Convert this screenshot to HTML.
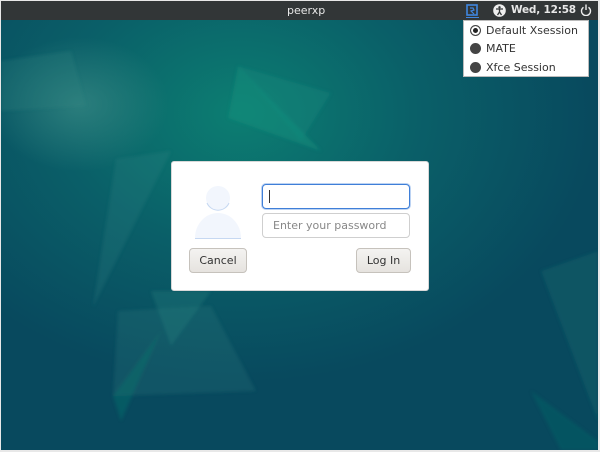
<!DOCTYPE html>
<html><head><style>
*{margin:0;padding:0;box-sizing:border-box}
body{width:600px;height:452px;overflow:hidden;background:#e8e8e8;font-family:"DejaVu Sans","Liberation Sans",sans-serif;position:relative}
#scr{position:absolute;left:1px;top:1px;width:597px;height:449px;overflow:hidden;background:#0a4d60}
#bar{position:absolute;left:0;top:0;width:597px;height:19px;background:#323637;color:#e8e8e8;font-size:11px}
.abs{position:absolute}
#menu{position:absolute;left:462px;top:19px;width:126px;height:57px;background:#fff;border:1px solid #bbb;font-size:11px;color:#333}
.it{position:absolute;left:6px;height:14px;line-height:14px}
.dot{display:inline-block;width:11px;height:11px;border-radius:50%;background:#444;vertical-align:-2px;margin-right:5px}
#dlg{position:absolute;left:170px;top:160px;width:258px;height:130px;background:#fff;border-radius:3px;border:1px solid #d8d8d8}
.fld{position:absolute;background:#fff;border:1px solid #cfcfcf;border-radius:4px;font-size:11px;color:#888}
.btn{position:absolute;background:linear-gradient(#f4f3f1,#e6e3df);border:1px solid #c6c2bc;border-radius:4px;font-size:11px;color:#333;text-align:center;line-height:23px}
</style></head><body>
<div id="scr">
<svg class="abs" style="left:0;top:0" width="597" height="449">
<defs>
<radialGradient id="g1" cx="0.4" cy="0.25" r="0.6"><stop offset="0" stop-color="#0c7e72"/><stop offset="0.5" stop-color="#0a5f68"/><stop offset="1" stop-color="#08495e"/></radialGradient>
<radialGradient id="g2" cx="0.13" cy="0.23" r="0.15"><stop offset="0" stop-color="#3a8a85" stop-opacity="0.7"/><stop offset="1" stop-color="#3a8a85" stop-opacity="0"/></radialGradient>
<filter id="bl"><feGaussianBlur stdDeviation="1.5"/></filter>
</defs>
<rect width="597" height="449" fill="url(#g1)"/>
<rect width="597" height="449" fill="url(#g2)"/>
<g filter="url(#bl)">
<polygon points="237,65 227,117 320,150" fill="#17937e" opacity="0.45"/>
<polygon points="237,65 330,92 300,140" fill="#139080" opacity="0.3"/>
<polygon points="0,60 70,50 85,105 0,110" fill="#2a8580" opacity="0.25"/>
<polygon points="115,158 170,150 92,306" fill="#3e8c8a" opacity="0.2"/>
<polygon points="117,310 210,305 255,390 112,395" fill="#3a8787" opacity="0.2"/>
<polygon points="112,395 160,330 120,420" fill="#108070" opacity="0.3"/>
<polygon points="150,290 210,290 170,345" fill="#2d8d85" opacity="0.25"/>
<polygon points="540,270 597,250 597,420" fill="#157070" opacity="0.3"/>
<polygon points="530,390 597,440 597,449 560,449" fill="#0f6a6a" opacity="0.4"/>
</g>
</svg>
<div id="bar">
<div class="abs" style="left:286px;top:3px">peerxp</div>
<svg class="abs" style="left:465px;top:3px" width="13" height="14"><rect x="1" y="1" width="10" height="10" fill="none" stroke="#3f86e0" stroke-width="1.6"/><path d="M4 4h3l1 2-3 1 3 3" fill="none" stroke="#3f86e0" stroke-width="1.2"/><line x1="0" y1="13.5" x2="13" y2="13.5" stroke="#3f86e0"/></svg>
<svg class="abs" style="left:492px;top:3px" width="13" height="13"><circle cx="6.5" cy="6.5" r="6.3" fill="#eee"/><circle cx="6.5" cy="3.3" r="1.2" fill="#323637"/><path d="M3 5h7M6.5 5v3M6.5 8l-2 3M6.5 8l2 3" stroke="#323637" stroke-width="1.3" fill="none"/></svg>
<div class="abs" style="left:510px;top:3px;font-weight:bold;font-size:10.5px;letter-spacing:-0.2px">Wed, 12:58</div>
<svg class="abs" style="left:579px;top:3px" width="12" height="12"><path d="M3.5 3.3A4.5 4.5 0 1 0 8.5 3.3" fill="none" stroke="#eee" stroke-width="1.4"/><line x1="6" y1="0.5" x2="6" y2="6" stroke="#eee" stroke-width="1.4"/></svg>
</div>
<div id="menu">
<div class="it" style="top:3px"><span class="dot" style="background:#222;border:1px solid #444;box-shadow:inset 0 0 0 2px #fff"></span>Default Xsession</div>
<div class="it" style="top:21px"><span class="dot"></span>MATE</div>
<div class="it" style="top:40px"><span class="dot"></span>Xfce Session</div>
</div>
<div id="dlg">
<svg class="abs" style="left:22px;top:24px" width="50" height="54"><circle cx="24" cy="12" r="12" fill="#f2f6fd"/><path d="M13 17a12 12 0 0 0 22 0" fill="none" stroke="#c6d8f2" stroke-width="1"/><path d="M1 52a23 25 0 0 1 46 0z" fill="#f2f6fd"/><line x1="1" y1="52.5" x2="47" y2="52.5" stroke="#c6d8f2"/></svg>
<div class="fld" style="left:90px;top:22px;width:148px;height:25px;border:1.5px solid #3f7fd8;box-shadow:0 0 0 1px #bcd3f3"><div class="abs" style="left:6px;top:5px;width:1px;height:13px;background:#333"></div></div>
<div class="fld" style="left:90px;top:51px;width:148px;height:25px;line-height:23px;padding-left:10px">Enter your password</div>
<div class="btn" style="left:17px;top:86px;width:58px;height:25px">Cancel</div>
<div class="btn" style="left:184px;top:86px;width:55px;height:25px">Log In</div>
</div>
</div>
</body></html>
